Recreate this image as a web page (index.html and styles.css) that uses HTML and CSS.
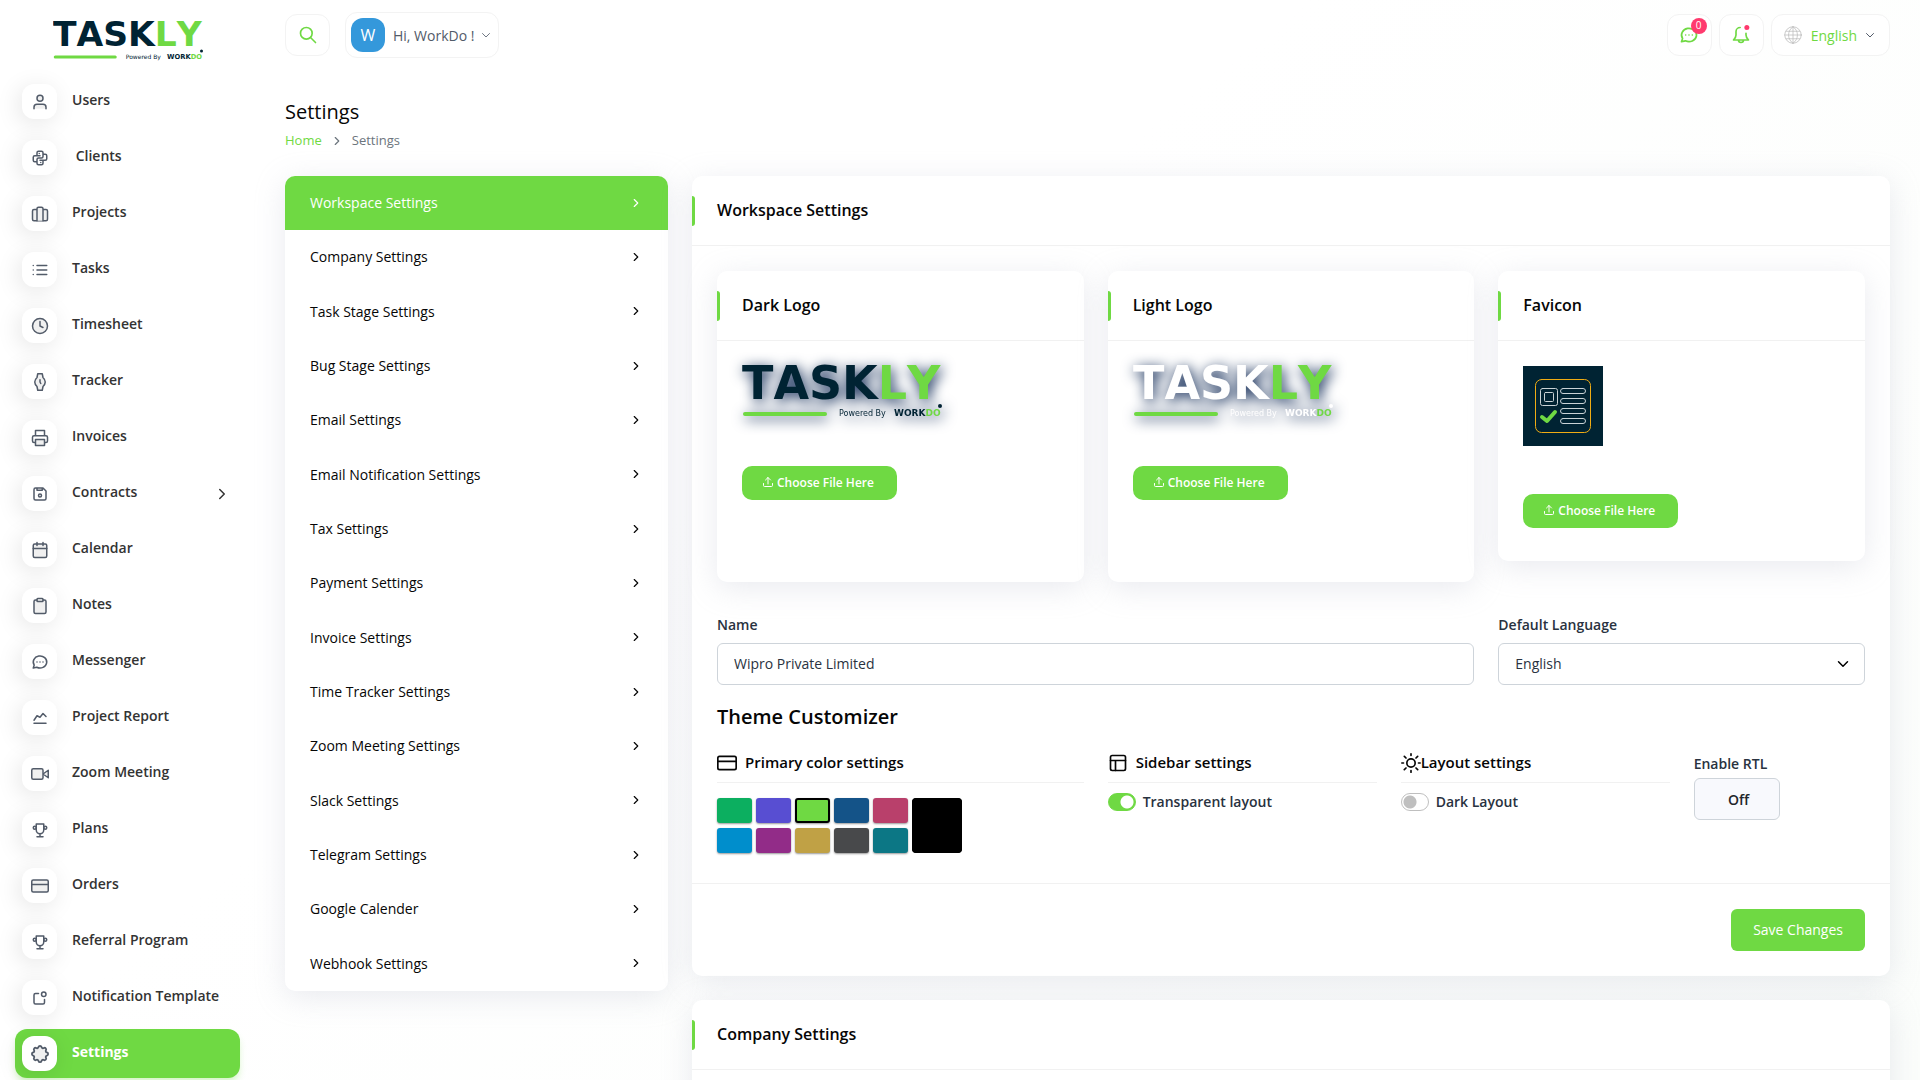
FILE: index.html
```html
<!DOCTYPE html>
<html lang="en">
<head>
    <meta charset="UTF-8">
    <meta name="viewport" content="width=device-width, initial-scale=1.0">
    <title>Settings - Taskly</title>
    <link rel="stylesheet" href="styles.css">
</head>
<body>
    <!-- Shared icons -->
    <svg class="sprite" aria-hidden="true">
        <symbol id="i-right" viewBox="0 0 24 24"><path d="M9 6l6 6-6 6"/></symbol>
        <symbol id="i-down" viewBox="0 0 24 24"><path d="M5 9l7 7 7-7"/></symbol>
        <symbol id="i-trophy" viewBox="0 0 24 24"><path d="M8 21h8M12 17v4M7 4h10M17 4v8a5 5 0 0 1-10 0V4"/><circle cx="5" cy="9" r="2"/><circle cx="19" cy="9" r="2"/></symbol>
        <symbol id="i-message" viewBox="0 0 24 24"><path d="M3 20l1.3-3.9A9 8 0 1 1 7.7 19L3 20M12 12v.01M8 12v.01M16 12v.01"/></symbol>
        <symbol id="i-card" viewBox="0 0 24 24"><rect x="1" y="4" width="22" height="16" rx="2"/><path d="M1 10h22"/></symbol>
        <symbol id="i-upload" viewBox="0 0 24 24"><path d="M3 15v4a2 2 0 0 0 2 2h14a2 2 0 0 0 2-2v-4M7 8l5-5 5 5M12 3v13"/></symbol>
        <symbol id="logo" viewBox="0 -12 200 68">
            <text class="logo-word" x="0" y="33">TASK<tspan class="logo-green">LY</tspan></text>
            <rect class="logo-green" x="1" y="46" width="84" height="4" rx="2"/>
            <text class="logo-by" x="97" y="50">Powered By</text>
            <text class="logo-brand" x="152" y="50">WORK<tspan class="logo-green">DO</tspan></text>
            <circle cx="198" cy="40" r="2"/>
        </symbol>
    </svg>

    <div class="layout">
        <aside class="sidebar">
            <a href="#" class="brand" aria-label="Taskly">
                <svg class="logo logo-dark"><use href="#logo"/></svg>
            </a>
            <nav>
                <ul class="nav-list">
                    <li><a href="#"><span class="nav-icon"><svg viewBox="0 0 24 24"><path class="soft" d="M20 21v-2a4 4 0 0 0-4-4H8a4 4 0 0 0-4 4v2"/><circle class="soft" cx="12" cy="7" r="4"/></svg></span>Users</a></li>
                    <li><a href="#"><span class="nav-icon"><svg viewBox="0 0 24 24"><path d="M12 9H5a2 2 0 0 0-2 2v4a2 2 0 0 0 2 2h3M12 15h7a2 2 0 0 0 2-2V9a2 2 0 0 0-2-2h-3M8 9V5a2 2 0 0 1 2-2h4a2 2 0 0 1 2 2v5a2 2 0 0 1-2 2h-4a2 2 0 0 0-2 2v5a2 2 0 0 0 2 2h4a2 2 0 0 0 2-2v-4M11 6v.01M13 18v.01"/></svg></span>&nbsp;Clients</a></li>
                    <li><a href="#"><span class="nav-icon"><svg viewBox="0 0 24 24"><rect class="soft" x="2" y="6" width="20" height="15" rx="2"/><path class="soft" d="M16 21V5a2 2 0 0 0-2-2h-4a2 2 0 0 0-2 2v16"/></svg></span>Projects</a></li>
                    <li><a href="#"><span class="nav-icon"><svg viewBox="0 0 24 24"><path d="M8 6h13M8 12h13M8 18h13M3 6v.01M3 12v.01M3 18v.01"/></svg></span>Tasks</a></li>
                    <li><a href="#"><span class="nav-icon"><svg viewBox="0 0 24 24"><circle class="soft" cx="12" cy="12" r="10"/><path d="M12 6v6l4 2"/></svg></span>Timesheet</a></li>
                    <li><a href="#"><span class="nav-icon"><svg viewBox="0 0 24 24"><path class="soft" d="M9 1h6l1 5c2 2 3 4 3 6s-1 4-3 6l-1 5H9l-1-5c-2-2-3-4-3-6s1-4 3-6z"/><path d="M12 9v3l1 2"/></svg></span>Tracker</a></li>
                    <li><a href="#"><span class="nav-icon"><svg viewBox="0 0 24 24"><path d="M6 9V2h12v7M6 18H4a2 2 0 0 1-2-2v-5a2 2 0 0 1 2-2h16a2 2 0 0 1 2 2v5a2 2 0 0 1-2 2h-2"/><path class="soft" d="M6 14h12v8H6z"/></svg></span>Invoices</a></li>
                    <li><a href="#"><span class="nav-icon"><svg viewBox="0 0 24 24"><path d="M6 4h10l4 4v10a2 2 0 0 1-2 2H6a2 2 0 0 1-2-2V6a2 2 0 0 1 2-2M15 4v3H8V4"/><circle cx="12" cy="14" r="2"/></svg></span>Contracts<svg class="nav-arrow"><use href="#i-right"/></svg></a></li>
                    <li><a href="#"><span class="nav-icon"><svg viewBox="0 0 24 24"><rect class="soft" x="3" y="4" width="18" height="18" rx="2"/><path d="M16 2v4M8 2v4M3 10h18"/></svg></span>Calendar</a></li>
                    <li><a href="#"><span class="nav-icon"><svg viewBox="0 0 24 24"><path class="soft" d="M16 4h2a2 2 0 0 1 2 2v14a2 2 0 0 1-2 2H6a2 2 0 0 1-2-2V6a2 2 0 0 1 2-2h2"/><rect x="8" y="2" width="8" height="4" rx="1"/></svg></span>Notes</a></li>
                    <li><a href="#"><span class="nav-icon"><svg><use href="#i-message"/></svg></span>Messenger</a></li>
                    <li><a href="#"><span class="nav-icon"><svg viewBox="0 0 24 24"><path d="M4 19h16M4 15l4-6 4 2 4-5 4 4"/></svg></span>Project Report</a></li>
                    <li><a href="#"><span class="nav-icon"><svg viewBox="0 0 24 24"><path class="soft" d="M23 7l-7 5 7 5z"/><rect class="soft" x="1" y="5" width="15" height="14" rx="2"/></svg></span>Zoom Meeting</a></li>
                    <li><a href="#"><span class="nav-icon"><svg><use href="#i-trophy"/></svg></span>Plans</a></li>
                    <li><a href="#"><span class="nav-icon"><svg class="soft"><use href="#i-card"/></svg></span>Orders</a></li>
                    <li><a href="#"><span class="nav-icon"><svg><use href="#i-trophy"/></svg></span>Referral Program</a></li>
                    <li><a href="#"><span class="nav-icon"><svg viewBox="0 0 24 24"><path d="M10 6H6a2 2 0 0 0-2 2v10a2 2 0 0 0 2 2h10a2 2 0 0 0 2-2v-4"/><circle cx="17" cy="7" r="3"/></svg></span>Notification Template</a></li>
                    <li><a href="#" class="active"><span class="nav-icon"><svg viewBox="2 2 20 20"><path class="soft" d="M10.325 4.317c.426-1.756 2.924-1.756 3.35 0a1.724 1.724 0 0 0 2.573 1.066c1.543-.94 3.31.826 2.37 2.37a1.724 1.724 0 0 0 1.065 2.572c1.756.426 1.756 2.924 0 3.35a1.724 1.724 0 0 0-1.066 2.573c.94 1.543-.826 3.31-2.37 2.37a1.724 1.724 0 0 0-2.572 1.065c-.426 1.756-2.924 1.756-3.35 0a1.724 1.724 0 0 0-2.573-1.066c-1.543.94-3.31-.826-2.37-2.37a1.724 1.724 0 0 0-1.065-2.572c-1.756-.426-1.756-2.924 0-3.35a1.724 1.724 0 0 0 1.066-2.573c-.94-1.543.826-3.31 2.37-2.37.996.608 2.296.07 2.572-1.065z"/></svg></span>Settings</a></li>
                </ul>
            </nav>
        </aside>

        <main class="main">
            <header class="topbar">
                <button type="button" class="top-btn" aria-label="Search"><svg class="green" viewBox="0 0 24 24"><circle cx="10" cy="10" r="7"/><path d="M21 21l-6-6"/></svg></button>
                <button type="button" class="top-btn user-btn"><span class="avatar">W</span>Hi, WorkDo !<svg class="caret"><use href="#i-down"/></svg></button>
                <div class="top-right">
                    <button type="button" class="top-btn" aria-label="Messages"><svg class="green"><use href="#i-message"/></svg><span class="badge">0</span></button>
                    <button type="button" class="top-btn" aria-label="Notifications"><svg class="green" viewBox="0 0 24 24"><path d="M11 3a5 5 0 0 0-5 5v4c0 2-1 4-3 6h18c-2-2-3-4-3-6v-2M9 18a3 3 0 0 0 6 0"/><circle class="dot" cx="19" cy="3" r="3"/></svg></button>
                    <button type="button" class="top-btn lang-btn"><svg class="globe" viewBox="0 0 24 24"><circle cx="12" cy="12" r="11"/><path d="M12 1v22M1 12h22M3 7h18M3 17h18M12 1C4 6 4 18 12 23M12 1c8 5 8 17 0 22"/></svg>English<svg class="caret"><use href="#i-down"/></svg></button>
                </div>
            </header>

            <h1>Settings</h1>
            <div class="breadcrumb"><a href="#">Home</a><svg><use href="#i-right"/></svg><span>Settings</span></div>

            <div class="columns">
                <ul class="card tabs">
                    <li><a href="#workspace" class="active">Workspace Settings<svg><use href="#i-right"/></svg></a></li>
                    <li><a href="#company">Company Settings<svg><use href="#i-right"/></svg></a></li>
                    <li><a href="#">Task Stage Settings<svg><use href="#i-right"/></svg></a></li>
                    <li><a href="#">Bug Stage Settings<svg><use href="#i-right"/></svg></a></li>
                    <li><a href="#">Email Settings<svg><use href="#i-right"/></svg></a></li>
                    <li><a href="#">Email Notification Settings<svg><use href="#i-right"/></svg></a></li>
                    <li><a href="#">Tax Settings<svg><use href="#i-right"/></svg></a></li>
                    <li><a href="#">Payment Settings<svg><use href="#i-right"/></svg></a></li>
                    <li><a href="#">Invoice Settings<svg><use href="#i-right"/></svg></a></li>
                    <li><a href="#">Time Tracker Settings<svg><use href="#i-right"/></svg></a></li>
                    <li><a href="#">Zoom Meeting Settings<svg><use href="#i-right"/></svg></a></li>
                    <li><a href="#">Slack Settings<svg><use href="#i-right"/></svg></a></li>
                    <li><a href="#">Telegram Settings<svg><use href="#i-right"/></svg></a></li>
                    <li><a href="#">Google Calender<svg><use href="#i-right"/></svg></a></li>
                    <li><a href="#">Webhook Settings<svg><use href="#i-right"/></svg></a></li>
                </ul>

                <div class="panels">
                    <form class="card" id="workspace">
                        <div class="card-header"><h2>Workspace Settings</h2></div>
                        <div class="card-body">
                            <div class="grid">
                                <div class="card upload-card span-4">
                                    <div class="card-header"><h2>Dark Logo</h2></div>
                                    <div class="card-body">
                                        <svg class="logo logo-dark logo-shadow"><use href="#logo"/></svg>
                                        <label class="file-btn" for="logo_dark"><svg><use href="#i-upload"/></svg>Choose File Here</label>
                                        <input type="file" id="logo_dark">
                                    </div>
                                </div>
                                <div class="card upload-card span-4">
                                    <div class="card-header"><h2>Light Logo</h2></div>
                                    <div class="card-body">
                                        <svg class="logo logo-light logo-shadow"><use href="#logo"/></svg>
                                        <label class="file-btn" for="logo_light"><svg><use href="#i-upload"/></svg>Choose File Here</label>
                                        <input type="file" id="logo_light">
                                    </div>
                                </div>
                                <div class="card favicon-card span-4">
                                    <div class="card-header"><h2>Favicon</h2></div>
                                    <div class="card-body">
                                        <svg class="favicon" viewBox="0 0 80 80">
                                            <rect width="80" height="80" fill="#002333"/>
                                            <g fill="none" stroke="#c9d2d6">
                                                <rect x="12.5" y="13.5" width="55" height="53" rx="6" stroke="#f0ac14"/>
                                                <rect x="17.5" y="22.5" width="17" height="17" rx="2"/>
                                                <rect x="21.5" y="26.5" width="9" height="9" rx="1"/>
                                                <rect x="37.5" y="22.5" width="25" height="5" rx="2.5"/>
                                                <rect x="37.5" y="32.5" width="25" height="5" rx="2.5"/>
                                                <rect x="37.5" y="42.5" width="25" height="5" rx="2.5"/>
                                                <rect x="37.5" y="52.5" width="25" height="5" rx="2.5"/>
                                                <path d="M19 51l5 4 8-9" stroke="#6fd943" stroke-width="4" stroke-linecap="round"/>
                                            </g>
                                        </svg>
                                        <label class="file-btn" for="favicon"><svg><use href="#i-upload"/></svg>Choose File Here</label>
                                        <input type="file" id="favicon">
                                    </div>
                                </div>
                            </div>

                            <div class="grid fields">
                                <div class="span-8">
                                    <label for="name">Name</label>
                                    <input type="text" class="control" id="name" value="Wipro Private Limited">
                                </div>
                                <div class="span-4">
                                    <label for="lang">Default Language</label>
                                    <select class="control" id="lang">
                                        <option>English</option>
                                    </select>
                                </div>
                            </div>

                            <h3>Theme Customizer</h3>
                            <div class="grid">
                                <div class="span-4">
                                    <h4><svg><use href="#i-card"/></svg>Primary color settings</h4>
                                    <div class="colors">
                                        <div class="swatches">
                                            <button type="button" class="c1" aria-label="Green"></button>
                                            <button type="button" class="c2" aria-label="Violet"></button>
                                            <button type="button" class="c3 selected" aria-label="Lime"></button>
                                            <button type="button" class="c4" aria-label="Navy"></button>
                                            <button type="button" class="c5" aria-label="Rose"></button>
                                            <button type="button" class="c6" aria-label="Blue"></button>
                                            <button type="button" class="c7" aria-label="Purple"></button>
                                            <button type="button" class="c8" aria-label="Gold"></button>
                                            <button type="button" class="c9" aria-label="Grey"></button>
                                            <button type="button" class="c10" aria-label="Teal"></button>
                                        </div>
                                        <input type="color" class="picker" value="#000000" aria-label="Custom color">
                                    </div>
                                </div>
                                <div class="span-3">
                                    <h4><svg viewBox="0 0 24 24"><rect x="3" y="3" width="18" height="18" rx="2"/><path d="M3 9h18M9 21V9"/></svg>Sidebar settings</h4>
                                    <div class="switch"><input type="checkbox" id="transparent" checked><label for="transparent">Transparent layout</label></div>
                                </div>
                                <div class="span-3">
                                    <h4 class="tight"><svg viewBox="0 0 24 24"><circle cx="12" cy="12" r="5"/><path d="M12 1v2M12 21v2M4 4l2 2M18 18l2 2M1 12h2M21 12h2M4 20l2-2M18 6l2-2"/></svg>Layout settings</h4>
                                    <div class="switch"><input type="checkbox" id="dark"><label for="dark">Dark Layout</label></div>
                                </div>
                                <div class="span-2 rtl">
                                    <label for="rtl">Enable RTL</label>
                                    <button type="button" id="rtl">Off</button>
                                </div>
                            </div>
                        </div>
                        <div class="card-footer"><button type="submit" class="save-btn">Save Changes</button></div>
                    </form>

                    <div class="card" id="company">
                        <div class="card-header"><h2>Company Settings</h2></div>
                        <div class="card-body"></div>
                    </div>
                </div>
            </div>
        </main>
    </div>
</body>
</html>
```

FILE: styles.css
```css
* {
    box-sizing: border-box;
}
body {
    margin: 0;
    font-family: "Open Sans", sans-serif;
    font-size: 14px;
    line-height: 21px;
    color: #293240;
    background: linear-gradient(141deg, #fff 40%, #fbfdfb);
}
ul {
    list-style: none;
    margin: 0;
    padding: 0;
}
a {
    color: inherit;
    text-decoration: none;
}
button, input, select {
    font: inherit;
    color: inherit;
}
button {
    cursor: pointer;
}
h1, h2, h3, h4 {
    margin: 0;
    color: #060606;
}
svg {
    flex: none;
    width: 18px;
    height: 18px;
    fill: none;
    stroke: currentColor;
    stroke-width: 2;
    stroke-linecap: round;
    stroke-linejoin: round;
}
.sprite {
    position: absolute;
    width: 0;
    height: 0;
}
.soft {
    fill: #f0f0f0;
}

/* Logo */
.logo {
    display: block;
    width: 150px;
    height: 51px;
    fill: currentColor;
    stroke: none;
    overflow: visible;
}
.logo-dark {
    color: #002333;
}
.logo-light {
    color: #fff;
}
.logo-word {
    font: bold 46px "DejaVu Sans", sans-serif;
    font-kerning: none;
}
.logo-by {
    font: 8px "DejaVu Sans", sans-serif;
}
.logo-brand {
    font: bold 9px "DejaVu Sans", sans-serif;
}
.logo-green {
    fill: #6fd943;
}
.logo-shadow {
    width: 200px;
    height: 68px;
    filter: drop-shadow(2px 3px 7px #011c4b);
}

.layout {
    display: flex;
    height: 100vh;
    overflow: hidden;
}

/* Sidebar */
.sidebar {
    flex: none;
    width: 255px;
}
.brand {
    display: block;
    height: 77px;
    padding: 12px 53px;
}
.nav-list {
    display: flex;
    flex-direction: column;
    gap: 7px;
    padding: 0 15px;
}
.nav-list a {
    display: flex;
    height: 49px;
    padding: 7px;
    border-radius: 12px;
    line-height: 31px;
    font-weight: 600;
    color: #333;
}
.nav-icon {
    display: flex;
    align-items: center;
    justify-content: center;
    width: 35px;
    height: 35px;
    margin-right: 15px;
    border-radius: 12px;
    background: #fff;
    color: #525b69;
    box-shadow: -3px 4px 23px rgba(0, 0, 0, 0.1);
}
.nav-arrow {
    align-self: center;
    margin: 0 2px 0 auto;
}
.nav-list a.active {
    background: #6fd943;
    color: #fff;
    font-weight: 700;
    box-shadow: 0 5px 7px -1px rgba(111, 217, 67, 0.3);
}

/* Top bar */
.main {
    flex: 1;
    min-width: 0;
    padding: 0 30px;
}
.topbar {
    display: flex;
    align-items: center;
    height: 70px;
    margin-bottom: 27px;
}
.top-btn {
    position: relative;
    display: flex;
    align-items: center;
    justify-content: center;
    width: 45px;
    height: 42px;
    padding: 0;
    border: 1px solid #f3f3f3;
    border-radius: 12px;
    background: #fff;
    font-weight: 500;
}
.green {
    width: 20px;
    height: 20px;
    color: #6fd943;
}
.user-btn {
    width: auto;
    height: 46px;
    margin-left: 15px;
    padding: 0 6px 0 5px;
    color: #525b69;
}
.avatar {
    width: 34px;
    height: 34px;
    margin-right: 8px;
    border-radius: 12px;
    background: #3498db;
    color: #fff;
    font-size: 16px;
    font-weight: 400;
    line-height: 34px;
}
.caret {
    width: 12px;
    height: 12px;
    margin-left: 6px;
    color: #707884;
}
.top-right {
    display: flex;
    gap: 7px;
    margin-left: auto;
}
.badge {
    position: absolute;
    top: 3px;
    right: 4px;
    width: 16px;
    height: 16px;
    border-radius: 50%;
    background: #ff3a6e;
    color: #fff;
    font-size: 10px;
    font-weight: 400;
    line-height: 14px;
}
.dot {
    fill: #ff3a6e;
    stroke: none;
}
.lang-btn {
    width: auto;
    padding: 0 13px 0 12px;
    color: #6fd943;
}
.globe {
    margin-right: 9px;
    color: #bbb;
}
.globe path, .globe circle {
    stroke-width: 1;
}
.lang-btn .caret {
    margin-left: 7px;
    color: #525b69;
}

h1 {
    font-size: 20px;
    font-weight: 500;
    line-height: 30px;
}
.breadcrumb {
    display: flex;
    align-items: center;
    margin: 3px 0 25px;
    font-size: 13px;
    color: #6c757d;
}
.breadcrumb a {
    color: #6fd943;
}
.breadcrumb svg {
    width: 14px;
    height: 14px;
    margin: 0 8px;
}

/* Cards */
.columns {
    display: grid;
    grid-template-columns: 383px 1fr;
    gap: 24px;
    align-items: start;
}
.card {
    border-radius: 10px;
    background: #fff;
    box-shadow: 0 6px 30px rgba(182, 186, 203, 0.3);
}
.card-header {
    display: flex;
    align-items: center;
    height: 70px;
    border-bottom: 1px solid #f1f1f1;
}
.card-header::before {
    content: "";
    width: 3px;
    height: 30px;
    margin-right: 22px;
    border-radius: 0 3px 3px 0;
    background: #6fd943;
}
.card-header h2 {
    padding-bottom: 2px;
    font-size: 16px;
    font-weight: 600;
    line-height: 24px;
}
.card-body {
    padding: 25px;
}
.card-footer {
    display: flex;
    justify-content: flex-end;
    padding: 25px;
    border-top: 1px solid #f1f1f1;
}

/* Settings tabs */
.tabs {
    display: flex;
    flex-direction: column;
    min-height: 815px;
    overflow: hidden;
}
.tabs li {
    display: flex;
    flex: 1;
}
.tabs a {
    display: flex;
    flex: 1;
    align-items: center;
    justify-content: space-between;
    padding: 0 25px 1px;
    color: #060606;
}
.tabs a.active {
    background: #6fd943;
    color: #fff;
}
.tabs svg {
    width: 14px;
    height: 14px;
}

/* Workspace form */
.panels {
    display: flex;
    flex-direction: column;
    gap: 24px;
}
.grid {
    display: grid;
    grid-template-columns: repeat(12, 1fr);
    gap: 24px;
    align-items: start;
}
.span-2 {
    grid-column: span 2;
}
.span-3 {
    grid-column: span 3;
}
.span-4 {
    grid-column: span 4;
}
.span-8 {
    grid-column: span 8;
}
.upload-card {
    min-height: 311px;
}
.upload-card .card-body {
    padding-top: 13px;
}
.upload-card .logo {
    margin-bottom: 44px;
}
.favicon-card .card-body {
    padding-bottom: 33px;
}
.favicon {
    display: block;
    width: 80px;
    height: 80px;
    margin-bottom: 48px;
    stroke: none;
    stroke-width: 1;
}
.file-btn {
    display: flex;
    align-items: center;
    gap: 3px;
    width: fit-content;
    height: 34px;
    padding: 0 23px 2px 20px;
    border-radius: 10px;
    background: #6fd943;
    color: #fff;
    font-size: 12px;
    font-weight: 600;
    cursor: pointer;
}
.file-btn svg {
    width: 12px;
    height: 12px;
}
input[type="file"] {
    display: none;
}
.fields {
    margin-top: 32px;
}
.fields label, .rtl label {
    display: block;
    margin-bottom: 8px;
    font-weight: 600;
}
.control {
    display: block;
    width: 100%;
    height: 42px;
    padding: 0 16px 2px;
    border: 1px solid #ced4da;
    border-radius: 6px;
    background: #fff;
}
select.control {
    appearance: none;
    background: #fff url("data:image/svg+xml,%3csvg xmlns='http://www.w3.org/2000/svg' viewBox='0 0 16 16'%3e%3cpath fill='none' stroke='%23000' stroke-linecap='round' stroke-linejoin='round' stroke-width='2' d='M2 5l6 6 6-6'/%3e%3c/svg%3e") no-repeat right 15px center / 12px;
}
h3 {
    margin: 17px 0 18px;
    font-size: 20px;
    font-weight: 600;
    line-height: 30px;
}
h4 {
    display: flex;
    align-items: center;
    gap: 8px;
    padding-bottom: 7px;
    border-bottom: 1px solid #f1f1f1;
    font-size: 15px;
    font-weight: 600;
    line-height: 25px;
}
h4 svg {
    width: 20px;
    height: 20px;
}
h4.tight {
    gap: 0;
}
.colors {
    display: flex;
    gap: 4px;
    margin: 15px 0 5px;
}
.swatches {
    display: grid;
    grid-template-columns: repeat(5, 35px);
    gap: 5px 4px;
}
.swatches button {
    height: 25px;
    padding: 0;
    border: 0;
    border-radius: 3px;
    box-shadow: 0 1px 2px rgba(0, 0, 0, 0.4);
}
.swatches .selected {
    border: 2px solid #000;
}
.c1 { background: #0caf60; }
.c2 { background: #584ed2; }
.c3 { background: #6fd943; }
.c4 { background: #145388; }
.c5 { background: #b9406b; }
.c6 { background: #008ecc; }
.c7 { background: #922c88; }
.c8 { background: #c0a145; }
.c9 { background: #48494b; }
.c10 { background: #0c7785; }
.picker {
    appearance: none;
    width: 50px;
    height: 55px;
    padding: 0;
    border: 0;
    border-radius: 4px;
    background: #000;
}
.picker::-webkit-color-swatch-wrapper {
    padding: 0;
}
.picker::-webkit-color-swatch {
    border: 0;
    border-radius: 4px;
}
.switch {
    display: flex;
    align-items: center;
    gap: 7px;
    margin-top: 8px;
    font-weight: 600;
}
.switch input {
    appearance: none;
    width: 28px;
    height: 18px;
    margin: 0;
    border: 1px solid #bfbfbf;
    border-radius: 9px;
    background: radial-gradient(circle at 8px 8px, #bfbfbf 6px, #fff 7px);
}
.switch input:checked {
    border-color: #6fd943;
    background: radial-gradient(circle at 18px 8px, #fff 6px, #6fd943 7px);
}
.rtl label {
    margin: 3px 0 4px;
}
.rtl button {
    width: 86px;
    height: 42px;
    padding: 0 0 0 4px;
    border: 1px solid #ced4da;
    border-radius: 6px;
    background: #f8f9fd;
    color: #212529;
    font-weight: 600;
}
.save-btn {
    height: 42px;
    padding: 0 22px 2px;
    border: 0;
    border-radius: 6px;
    background: #6fd943;
    color: #fff;
    font-weight: 500;
}
```
